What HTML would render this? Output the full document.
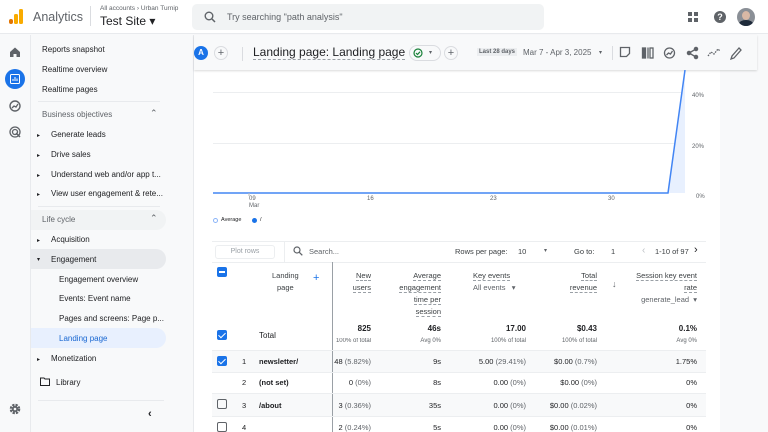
<!DOCTYPE html>
<html><head><meta charset="utf-8"><style>
*{margin:0;padding:0;box-sizing:border-box}
body{width:768px;height:432px;overflow:hidden;font-family:"Liberation Sans",Arial,sans-serif;color:#202124;background:#f8f9fa;position:relative;font-size:8px}
.a{position:absolute;white-space:nowrap}
.nav{font-size:8px;color:#202124}
.r{text-align:right}
.g{color:#5f6368}
.dash{border-bottom:1px dashed #9aa0a6}
.cb{position:absolute;width:10px;height:10px;border:1.5px solid #5f6368;border-radius:2px;left:217px}
.cbk{background:#1a73e8;border-color:#1a73e8}
.cbk::after{content:"";position:absolute;left:2px;top:0px;width:3px;height:6px;border:solid #fff;border-width:0 1.5px 1.5px 0;transform:rotate(45deg)}
</style></head><body>
<div class="a" style="left:0;top:0;width:768px;height:34px;background:#fff;border-bottom:1px solid #e8eaed"></div>
<svg class="a" style="left:8px;top:9px" width="16" height="16"><rect x="1" y="10" width="4" height="5" rx="2" fill="#e37400"/><rect x="6" y="5" width="4" height="10" rx="1.5" fill="#f9ab00"/><rect x="11" y="0" width="4" height="15" rx="1.5" fill="#f9ab00"/></svg>
<div class="a" style="left:33px;top:10px;font-size:12.5px;color:#5f6368">Analytics</div>
<div class="a" style="left:90px;top:6px;width:1px;height:20px;background:#dadce0"></div>
<div class="a" style="left:100px;top:5px;font-size:6.5px;color:#5f6368">All accounts › Urban Turnip</div>
<div class="a" style="left:100px;top:14px;font-size:12px">Test Site ▾</div>
<div class="a" style="left:192px;top:4px;width:352px;height:26px;background:#f1f3f4;border-radius:5px"></div>
<svg class="a" style="left:204px;top:11px" width="12" height="12"><circle cx="5" cy="5" r="3.8" stroke="#5f6368" stroke-width="1.4" fill="none"/><path d="M8 8l3 3" stroke="#5f6368" stroke-width="1.5"/></svg>
<div class="a" style="left:227px;top:12px;font-size:9px;color:#5f6368">Try searching "path analysis"</div>
<svg class="a" style="left:688px;top:12px" width="10" height="10"><rect x="0" y="0" width="4" height="4" fill="#5f6368"/><rect x="6" y="0" width="4" height="4" fill="#5f6368"/><rect x="0" y="6" width="4" height="4" fill="#5f6368"/><rect x="6" y="6" width="4" height="4" fill="#5f6368"/></svg>
<div class="a" style="left:714px;top:11px;width:12px;height:12px;border-radius:50%;background:#5f6368;color:#fff;font-size:9px;font-weight:bold;text-align:center;line-height:12px">?</div>
<div class="a" style="left:737px;top:8px;width:18px;height:18px;border-radius:50%;background:#8a8f96;overflow:hidden"><div style="position:absolute;left:5px;top:3px;width:8px;height:9px;border-radius:50%;background:#d8b8a5"></div><div style="position:absolute;left:2px;top:12px;width:14px;height:8px;border-radius:50%;background:#1e2a3a"></div></div>
<div class="a" style="left:30px;top:35px;width:1px;height:397px;background:#e8eaed"></div>
<svg class="a" style="left:9px;top:46px" width="12" height="12"><path d="M1 6L6 1.5 11 6V11H7.5V8h-3v3H1z" fill="#5f6368"/></svg>
<div class="a" style="left:5px;top:69px;width:20px;height:20px;border-radius:50%;background:#1a73e8"></div>
<svg class="a" style="left:10px;top:74px" width="10" height="10"><rect x="0.5" y="0.5" width="9" height="9" rx="1" fill="none" stroke="#fff"/><path d="M3 7V5M5 7V3M7 7V4.5" stroke="#fff"/></svg>
<svg class="a" style="left:9px;top:100px" width="12" height="12"><circle cx="6" cy="6" r="5" fill="none" stroke="#5f6368" stroke-width="1.4"/><path d="M3 8l2-2 2 1 2-3" stroke="#5f6368" fill="none" stroke-width="1.3"/></svg>
<svg class="a" style="left:9px;top:126px" width="12" height="12"><circle cx="6" cy="6" r="5" fill="none" stroke="#5f6368" stroke-width="1.3"/><circle cx="6" cy="6" r="2.5" fill="none" stroke="#5f6368" stroke-width="1.3"/><path d="M7 7l4 4" stroke="#5f6368" stroke-width="1.5"/></svg>
<svg class="a" style="left:9px;top:403px" width="12" height="12"><circle cx="6" cy="6" r="4" fill="none" stroke="#5f6368" stroke-width="2.6" stroke-dasharray="2.2 1"/><circle cx="6" cy="6" r="3" fill="#5f6368"/><circle cx="6" cy="6" r="1.3" fill="#f8f9fa"/></svg>
<div class="a" style="left:193px;top:35px;width:1px;height:397px;background:#e8eaed"></div>
<div class="a nav" style="left:42px;top:45px">Reports snapshot</div>
<div class="a nav" style="left:42px;top:65px">Realtime overview</div>
<div class="a nav" style="left:42px;top:85px">Realtime pages</div>
<div class="a" style="left:38px;top:101px;width:122px;height:1px;background:#e8eaed"></div>
<div class="a nav g" style="left:42px;top:110px">Business objectives</div>
<div class="a g" style="left:150px;top:108px;font-size:9px">⌃</div>
<div class="a nav" style="left:37px;top:132px;font-size:6px">▸</div><div class="a nav" style="left:51px;top:130px">Generate leads</div>
<div class="a nav" style="left:37px;top:152px;font-size:6px">▸</div><div class="a nav" style="left:51px;top:150px">Drive sales</div>
<div class="a nav" style="left:37px;top:172px;font-size:6px">▸</div><div class="a nav" style="left:51px;top:170px">Understand web and/or app t...</div>
<div class="a nav" style="left:37px;top:191px;font-size:6px">▸</div><div class="a nav" style="left:51px;top:189px">View user engagement &amp; rete...</div>
<div class="a" style="left:38px;top:206px;width:122px;height:1px;background:#e8eaed"></div>
<div class="a" style="left:31px;top:210px;width:135px;height:20px;background:#f1f3f4;border-radius:0 10px 10px 0"></div>
<div class="a nav g" style="left:42px;top:215px">Life cycle</div>
<div class="a g" style="left:150px;top:213px;font-size:9px">⌃</div>
<div class="a nav" style="left:37px;top:237px;font-size:6px">▸</div><div class="a nav" style="left:51px;top:235px">Acquisition</div>
<div class="a" style="left:31px;top:249px;width:135px;height:20px;background:#e8eaed;border-radius:0 10px 10px 0"></div>
<div class="a nav" style="left:37px;top:256px;font-size:6px">▾</div><div class="a nav" style="left:51px;top:255px">Engagement</div>
<div class="a nav" style="left:59px;top:275px">Engagement overview</div>
<div class="a nav" style="left:59px;top:294px">Events: Event name</div>
<div class="a nav" style="left:59px;top:314px">Pages and screens: Page p...</div>
<div class="a" style="left:31px;top:328px;width:135px;height:20px;background:#e8f0fe;border-radius:0 10px 10px 0"></div>
<div class="a nav" style="left:59px;top:334px;color:#1967d2">Landing page</div>
<div class="a nav" style="left:37px;top:356px;font-size:6px">▸</div><div class="a nav" style="left:51px;top:354px">Monetization</div>
<svg class="a" style="left:40px;top:377px" width="10" height="9"><path d="M0.5 1h3.5l1 1h4.5v6.5h-9z" fill="none" stroke="#202124"/></svg>
<div class="a nav" style="left:56px;top:378px">Library</div>
<div class="a" style="left:38px;top:400px;width:126px;height:1px;background:#e8eaed"></div>
<div class="a" style="left:148px;top:408px;font-size:11px;font-weight:bold">‹</div>
<div class="a" style="left:194px;top:35px;width:526px;height:397px;background:#fff"></div>
<div class="a" style="left:194px;top:35px;width:563px;height:35px;background:#f8f9fa;box-shadow:0 1px 2px rgba(0,0,0,.15)"></div>
<div class="a" style="left:194px;top:46px;width:14px;height:14px;border-radius:50%;background:#1a73e8;color:#fff;font-size:8px;font-weight:bold;text-align:center;line-height:14px">A</div>
<div class="a" style="left:214px;top:46px;width:14px;height:14px;border-radius:50%;border:1px solid #dadce0;color:#5f6368;font-size:11px;text-align:center;line-height:12px">+</div>
<div class="a" style="left:242px;top:47px;width:1px;height:14px;background:#dadce0"></div>
<div class="a dash" style="left:253px;top:45px;font-size:12px;color:#202124">Landing page: Landing page</div>
<div class="a" style="left:409px;top:45px;width:32px;height:16px;border:1px solid #dadce0;border-radius:8px"></div>
<svg class="a" style="left:413px;top:48px" width="10" height="10"><circle cx="5" cy="5" r="4" fill="none" stroke="#188038" stroke-width="1.2"/><path d="M3 5l1.5 1.5L7 3.8" fill="none" stroke="#188038" stroke-width="1.2"/></svg>
<div class="a g" style="left:429px;top:49px;font-size:6px">▾</div>
<div class="a" style="left:444px;top:46px;width:14px;height:14px;border-radius:50%;border:1px solid #dadce0;color:#5f6368;font-size:11px;text-align:center;line-height:12px">+</div>
<div class="a" style="left:477px;top:48px;font-size:6px;font-weight:bold;color:#5f6368;background:#eceef0;padding:1px 2px">Last 28 days</div>
<div class="a g" style="left:523px;top:48px;font-size:8px">Mar 7 - Apr 3, 2025</div>
<div class="a g" style="left:599px;top:49px;font-size:6px">▾</div>
<div class="a" style="left:612px;top:46px;width:1px;height:14px;background:#dadce0"></div>
<svg class="a" style="left:619px;top:46px" width="125" height="14" fill="none" stroke="#5f6368" stroke-width="1.3">
<path d="M1.5 1.5h9v6l-3 3h-6z"/>
<rect x="23.5" y="2" width="3" height="10" fill="#5f6368"/><path d="M29 1.5v11"/><rect x="31" y="2" width="3" height="10"/>
<circle cx="50.5" cy="7" r="5"/><path d="M47.5 9l2-2 2 1 2-3"/>
<circle cx="77" cy="3" r="1.6" fill="#5f6368"/><circle cx="70" cy="7" r="1.6" fill="#5f6368"/><circle cx="77" cy="11" r="1.6" fill="#5f6368"/><path d="M77 3l-7 4 7 4"/>
<path d="M89 10l3-4 3 2 4-5 2 2" stroke-dasharray="1.6 1"/>
<path d="M120 2l-7 8-1 3 3-1 7-8z"/>
</svg>
<div class="a" style="left:213px;top:92px;width:472px;height:1px;background:#eceef0"></div>
<div class="a" style="left:213px;top:143px;width:472px;height:1px;background:#eceef0"></div>
<div class="a" style="left:692px;top:93px;font-size:6px;color:#5f6368">40%</div>
<div class="a" style="left:692px;top:144px;font-size:6px;color:#5f6368">20%</div>
<div class="a" style="left:696px;top:194px;font-size:6px;color:#5f6368">0%</div>
<svg class="a" style="left:213px;top:70px" width="475" height="126"><path d="M455 123L472 0V123z" fill="#e8f0fe"/><path d="M0 123H455L472 0" fill="none" stroke="#4285f4" stroke-width="1.5"/><path d="M36 123v3" stroke="#bbb"/></svg>
<div class="a" style="left:249px;top:196px;font-size:6px;color:#5f6368;line-height:7px">09<br>Mar</div>
<div class="a" style="left:367px;top:196px;font-size:6px;color:#5f6368">16</div>
<div class="a" style="left:490px;top:196px;font-size:6px;color:#5f6368">23</div>
<div class="a" style="left:608px;top:196px;font-size:6px;color:#5f6368">30</div>
<div class="a" style="left:213px;top:218px;width:5px;height:5px;border-radius:50%;border:1px solid #8ab4f8"></div>
<div class="a" style="left:221px;top:217px;font-size:5.5px">Average</div>
<div class="a" style="left:252px;top:218px;width:5px;height:5px;border-radius:50%;background:#1a73e8"></div>
<div class="a" style="left:260px;top:217px;font-size:5.5px">/</div>
<div class="a" style="left:212px;top:241px;width:494px;height:1px;background:#eceef0"></div>
<div class="a" style="left:212px;top:262px;width:494px;height:1px;background:#eceef0"></div>
<div class="a" style="left:284px;top:241px;width:1px;height:21px;background:#eceef0"></div>
<div class="a" style="left:215px;top:245px;width:60px;height:14px;border:1px solid #eceef0;border-radius:3px;font-size:7px;color:#9aa0a6;text-align:center;line-height:12px">Plot rows</div>
<svg class="a" style="left:293px;top:246px" width="10" height="10"><circle cx="4" cy="4" r="3" stroke="#5f6368" stroke-width="1.2" fill="none"/><path d="M6.3 6.3l3 3" stroke="#5f6368" stroke-width="1.3"/></svg>
<div class="a g" style="left:309px;top:247px;font-size:7.5px">Search...</div>
<div class="a" style="left:455px;top:247px;font-size:7.5px;color:#3c4043">Rows per page:</div>
<div class="a" style="left:518px;top:247px;font-size:7.5px;color:#3c4043">10</div>
<div class="a g" style="left:544px;top:247px;font-size:6px">▾</div>
<div class="a" style="left:574px;top:247px;font-size:7.5px;color:#3c4043">Go to:</div>
<div class="a" style="left:611px;top:247px;font-size:7.5px;color:#3c4043">1</div>
<div class="a" style="left:642px;top:245px;font-size:10px;color:#bdc1c6">‹</div>
<div class="a" style="left:655px;top:247px;font-size:7.5px;color:#3c4043">1-10 of 97</div>
<div class="a" style="left:694px;top:244px;font-size:11px;color:#202124">›</div>
<div class="a" style="left:332px;top:262px;width:1px;height:170px;background:#9aa0a6"></div>
<div class="a" style="left:217px;top:267px;width:10px;height:10px;background:#1a73e8;border-radius:2px"><div style="position:absolute;left:2px;top:4px;width:6px;height:1.5px;background:#fff"></div></div>
<div class="a" style="left:272px;top:270px;font-size:7.5px;color:#3c4043;text-align:center;line-height:12px">Landing<br>page</div>
<div class="a" style="left:313px;top:272px;font-size:11px;color:#1a73e8">+</div>
<div class="a r" style="left:320px;top:270px;width:51px;font-size:7.5px;color:#3c4043;line-height:12px"><span class="dash">New</span><br><span class="dash">users</span></div>
<div class="a r" style="left:370px;top:270px;width:71px;font-size:7.5px;color:#3c4043;line-height:12px"><span class="dash">Average</span><br><span class="dash">engagement</span><br><span class="dash">time per</span><br><span class="dash">session</span></div>
<div class="a" style="left:473px;top:270px;font-size:7.5px;color:#3c4043;line-height:12px"><span class="dash">Key events</span><br><span class="g">All events &nbsp;&nbsp;▾</span></div>
<div class="a r" style="left:540px;top:270px;width:57px;font-size:7.5px;color:#3c4043;line-height:12px"><span class="dash">Total</span><br><span class="dash">revenue</span></div>
<div class="a" style="left:612px;top:279px;font-size:9px;color:#5f6368">↓</div>
<div class="a r" style="left:620px;top:270px;width:77px;font-size:7.5px;color:#3c4043;line-height:12px"><span class="dash">Session key event</span><br><span class="dash">rate</span><br><span class="g">generate_lead &nbsp;▾</span></div>
<div class="cb cbk" style="top:330px"></div>
<div class="a" style="left:259px;top:331px;font-size:8px">Total</div>
<div class="a r" style="left:320px;top:324px;width:51px;font-size:8px;font-weight:bold">825</div>
<div class="a r" style="left:333px;top:338px;width:38px;font-size:6px;color:#5f6368;overflow:hidden">100% of total</div>
<div class="a r" style="left:380px;top:324px;width:61px;font-size:8px;font-weight:bold">46s</div>
<div class="a r" style="left:380px;top:338px;width:61px;font-size:6px;color:#5f6368">Avg 0%</div>
<div class="a r" style="left:450px;top:324px;width:76px;font-size:8px;font-weight:bold">17.00</div>
<div class="a r" style="left:450px;top:338px;width:76px;font-size:6px;color:#5f6368">100% of total</div>
<div class="a r" style="left:520px;top:324px;width:77px;font-size:8px;font-weight:bold">$0.43</div>
<div class="a r" style="left:520px;top:338px;width:77px;font-size:6px;color:#5f6368">100% of total</div>
<div class="a r" style="left:620px;top:324px;width:77px;font-size:8px;font-weight:bold">0.1%</div>
<div class="a r" style="left:620px;top:338px;width:77px;font-size:6px;color:#5f6368">Avg 0%</div>
<div class="a" style="left:212px;top:350px;width:494px;height:1px;background:#eceef0"></div>
<div class="a" style="left:212px;top:351px;width:120px;height:21px;background:#f8f9fa"></div>
<div class="a" style="left:333px;top:351px;width:373px;height:21px;background:#f8f9fa"></div>
<div class="a" style="left:212px;top:372px;width:494px;height:1px;background:#eceef0"></div>
<div class="a" style="left:212px;top:393px;width:494px;height:1px;background:#eceef0"></div>
<div class="a" style="left:212px;top:394px;width:494px;height:22px;background:#f8f9fa"></div>
<div class="a" style="left:332px;top:394px;width:1px;height:22px;background:#9aa0a6"></div>
<div class="a" style="left:212px;top:416px;width:494px;height:1px;background:#eceef0"></div>
<div class="cb cbk" style="top:356px"></div>
<div class="cb" style="top:399px"></div>
<div class="cb" style="top:422px"></div>
<div class="a" style="left:242px;top:357px;font-size:7.5px">1</div><div class="a" style="left:259px;top:357px;font-size:7.5px;font-weight:bold">newsletter/</div>
<div class="a" style="left:242px;top:378px;font-size:7.5px">2</div><div class="a" style="left:259px;top:378px;font-size:7.5px;font-weight:bold">(not set)</div>
<div class="a" style="left:242px;top:401px;font-size:7.5px">3</div><div class="a" style="left:259px;top:401px;font-size:7.5px;font-weight:bold">/about</div>
<div class="a" style="left:242px;top:423px;font-size:7.5px">4</div>
<div class="a r" style="left:333px;top:357px;width:38px;font-size:7.5px;overflow:hidden;direction:rtl"><span style="direction:ltr;unicode-bidi:embed">48 <span class="g">(5.82%)</span></span></div>
<div class="a r" style="left:320px;top:378px;width:51px;font-size:7.5px">0 <span class="g">(0%)</span></div>
<div class="a r" style="left:320px;top:401px;width:51px;font-size:7.5px">3 <span class="g">(0.36%)</span></div>
<div class="a r" style="left:320px;top:423px;width:51px;font-size:7.5px">2 <span class="g">(0.24%)</span></div>
<div class="a r" style="left:380px;top:357px;width:61px;font-size:7.5px">9s</div>
<div class="a r" style="left:380px;top:378px;width:61px;font-size:7.5px">8s</div>
<div class="a r" style="left:380px;top:401px;width:61px;font-size:7.5px">35s</div>
<div class="a r" style="left:380px;top:423px;width:61px;font-size:7.5px">5s</div>
<div class="a r" style="left:450px;top:357px;width:76px;font-size:7.5px">5.00 <span class="g">(29.41%)</span></div>
<div class="a r" style="left:450px;top:378px;width:76px;font-size:7.5px">0.00 <span class="g">(0%)</span></div>
<div class="a r" style="left:450px;top:401px;width:76px;font-size:7.5px">0.00 <span class="g">(0%)</span></div>
<div class="a r" style="left:450px;top:423px;width:76px;font-size:7.5px">0.00 <span class="g">(0%)</span></div>
<div class="a r" style="left:520px;top:357px;width:77px;font-size:7.5px">$0.00 <span class="g">(0.7%)</span></div>
<div class="a r" style="left:520px;top:378px;width:77px;font-size:7.5px">$0.00 <span class="g">(0%)</span></div>
<div class="a r" style="left:520px;top:401px;width:77px;font-size:7.5px">$0.00 <span class="g">(0.02%)</span></div>
<div class="a r" style="left:520px;top:423px;width:77px;font-size:7.5px">$0.00 <span class="g">(0.01%)</span></div>
<div class="a r" style="left:620px;top:357px;width:77px;font-size:7.5px">1.75%</div>
<div class="a r" style="left:620px;top:378px;width:77px;font-size:7.5px">0%</div>
<div class="a r" style="left:620px;top:401px;width:77px;font-size:7.5px">0%</div>
<div class="a r" style="left:620px;top:423px;width:77px;font-size:7.5px">0%</div>
</body></html>
